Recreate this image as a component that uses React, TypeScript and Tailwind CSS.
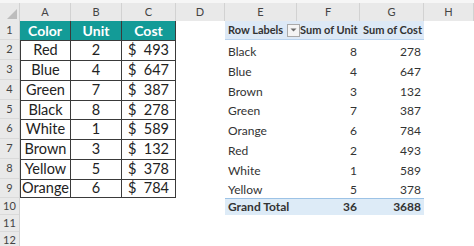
import React from 'react';

const cols = ['A', 'B', 'C', 'D', 'E', 'F', 'G', 'H'];
const colWidths = ['w-[51px]', 'w-[51px]', 'w-[54px]', 'w-[49px]', 'w-[72px]', 'w-[63px]', 'w-[64px]', 'w-[50px]'];

const source = [
  ['Red', 2, 493],
  ['Blue', 4, 647],
  ['Green', 7, 387],
  ['Black', 8, 278],
  ['White', 1, 589],
  ['Brown', 3, 132],
  ['Yellow', 5, 378],
  ['Orange', 6, 784],
] as const;

const pivot = [...source].sort((a, b) => a[0].localeCompare(b[0]));

const rowHeights = ['h-[19px]', 'h-[20px]', 'h-[20px]', 'h-[20px]', 'h-[19px]', 'h-[20px]', 'h-[20px]', 'h-[20px]', 'h-[19px]', 'h-[17px]', 'h-[17px]', 'h-[17px]'];

function DropButton() {
  return (
    <span className="ml-[4px] inline-flex h-[13px] w-[13px] shrink-0 items-center justify-center border border-[#a9a9a9] bg-[#f4f4f4]">
      <svg width="7" height="4" viewBox="0 0 7 4">
        <path d="M0.5 0.5 L6.5 0.5 L3.5 3.5 Z" fill="#6b6b6b" />
      </svg>
    </span>
  );
}

export default function App() {
  return (
    <div className="h-[246px] w-[474px] overflow-hidden bg-white font-['Lato','Open_Sans',sans-serif] text-[#222]">
      {/* column headers */}
      <div className="flex h-[21px] bg-[#e9e9e9] border-t-[3px] border-t-[#f6f6f6]">
        <div className="relative w-[20px] border-r border-[#d2d2d2]">
          <svg className="absolute bottom-[2px] right-[2px]" width="10" height="10" viewBox="0 0 10 10">
            <path d="M10 0 L10 10 L0 10 Z" fill="#bdbdbd" />
          </svg>
        </div>
        {cols.map((c, i) => (
          <div key={c} className={`flex items-center justify-center border-r border-[#d2d2d2] text-[11px] text-[#444] ${colWidths[i]}`}>
            {c}
          </div>
        ))}
      </div>

      <div className="flex">
        {/* row numbers */}
        <div className="w-[20px] bg-[#e9e9e9] border-r border-[#d2d2d2]">
          {rowHeights.map((h, i) => (
            <div key={i} className={`${h} flex items-center justify-center border-b border-[#dadada] text-[11px] text-[#444]`}>
              {i + 1}
            </div>
          ))}
        </div>

        {/* source table A:C */}
        <div className="w-[156px] self-start">
          <div className="flex h-[19px] bg-[#139b97] text-[14px] font-bold text-white">
            <div className="flex w-[51px] items-center justify-center border-r border-[#3a3a3a]">Color</div>
            <div className="flex w-[51px] items-center justify-center border-r border-[#3a3a3a]">Unit</div>
            <div className="flex w-[54px] items-center justify-center border-r border-[#3a3a3a]">Cost</div>
          </div>
          {source.map(([color, unit, cost], i) => (
            <div
              key={color}
              className={`flex ${rowHeights[i + 1]} border-t border-[#3a3a3a] text-[14.5px] leading-none ${i === source.length - 1 ? 'border-b' : ''}`}
            >
              <div className="flex w-[51px] items-center justify-center border-x border-[#3a3a3a]">{color}</div>
              <div className="flex w-[51px] items-center justify-center border-r border-[#3a3a3a]">{unit}</div>
              <div className="flex w-[54px] items-center justify-between border-r border-[#3a3a3a] px-[6px]">
                <span>$</span>
                <span>{cost}</span>
              </div>
            </div>
          ))}
        </div>

        {/* column D */}
        <div className="w-[49px]" />

        {/* pivot E:G */}
        <div className="w-[199px] self-start whitespace-nowrap text-[12px] text-[#333]">
          <div className="flex h-[19px] items-center bg-[#dde9f6] border-b border-[#b9d3ee] text-[11px] font-bold">
            <div className="flex w-[72px] items-center pl-[3px]">
              Row Labels
              <DropButton />
            </div>
            <div className="w-[63px] pl-[3px]">Sum of Unit</div>
            <div className="w-[64px] pl-[3px]">Sum of Cost</div>
          </div>
          {pivot.map(([color, unit, cost], i) => (
            <div key={color} className={`flex ${rowHeights[i + 1]} items-end leading-[16px]`}>
              <div className="w-[72px] pl-[3px]">{color}</div>
              <div className="w-[63px] pr-[3px] text-right">{unit}</div>
              <div className="w-[64px] pr-[3px] text-right">{cost}</div>
            </div>
          ))}
          <div className="flex h-[17px] items-center bg-[#ddebf7] border-t border-[#9dc3e6] font-bold">
            <div className="w-[72px] pl-[3px]">Grand Total</div>
            <div className="w-[63px] pr-[3px] text-right">36</div>
            <div className="w-[64px] pr-[3px] text-right">3688</div>
          </div>
        </div>
      </div>
    </div>
  );
}
